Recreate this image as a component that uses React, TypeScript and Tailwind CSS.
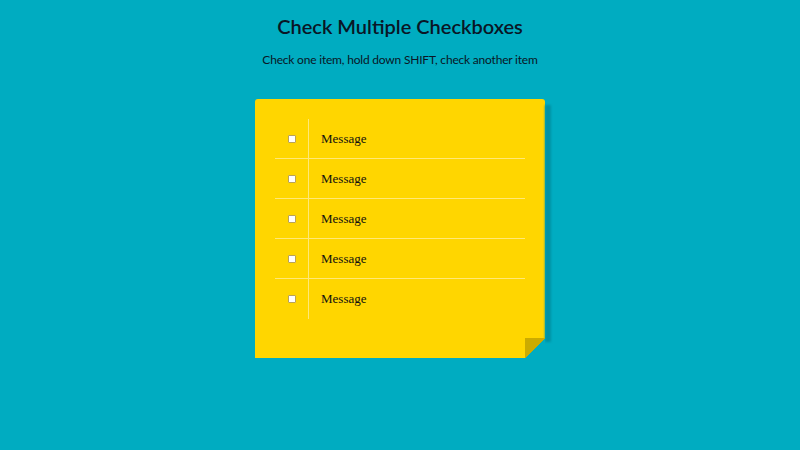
import React from "react";

const items = ["Message", "Message", "Message", "Message", "Message"];

export default function App() {
  return (
    <div className="w-[800px] h-[450px] bg-[#00acc1] flex flex-col items-center overflow-hidden" style={{ fontFamily: "Lato, 'Open Sans', sans-serif" }}>
      <h1 className="mt-[12px] h-[28px] leading-[28px] text-[20px] font-semibold text-[#0a1626]">
        Check Multiple Checkboxes
      </h1>
      <p className="mt-[12px] h-[16px] leading-[16px] text-[12px] tracking-[-0.2px] text-[#0a1626]">
        Check one item, hold down SHIFT, check another item
      </p>
      <div className="relative mt-[31px] w-[290px] h-[259px] bg-[#ffd600] rounded-t-[3px] px-[20px] pt-[20px]">
        <div className="absolute right-[-6px] top-[6px] bottom-[16px] w-[6px] bg-[#0092a4] blur-[1px]" />
        <div className="relative flex flex-col">
          {items.map((m, i) => (
            <label
              key={i}
              className={`flex items-center h-[40px] ${i < items.length - 1 ? "border-b border-[#ffe878]" : ""}`}
            >
              <span className="w-[33px] h-full flex items-center justify-center">
                <input
                  type="checkbox"
                  className="appearance-none w-[8px] h-[8px] m-0 bg-white border border-[#b9a25a] rounded-[1px] checked:bg-[#333]"
                />
              </span>
              <span
                className="flex-1 h-full flex items-center pl-[12px] border-l border-[#ffe878] text-[13px] text-[#111]"
                style={{ fontFamily: "'Liberation Serif', serif" }}
              >
                {m}
              </span>
            </label>
          ))}
        </div>
        <div
          className="absolute right-0 bottom-0 w-[20px] h-[20px]"
          style={{ background: "linear-gradient(to bottom right, #cbab00 50%, #00acc1 50%)" }}
        />
      </div>
    </div>
  );
}
